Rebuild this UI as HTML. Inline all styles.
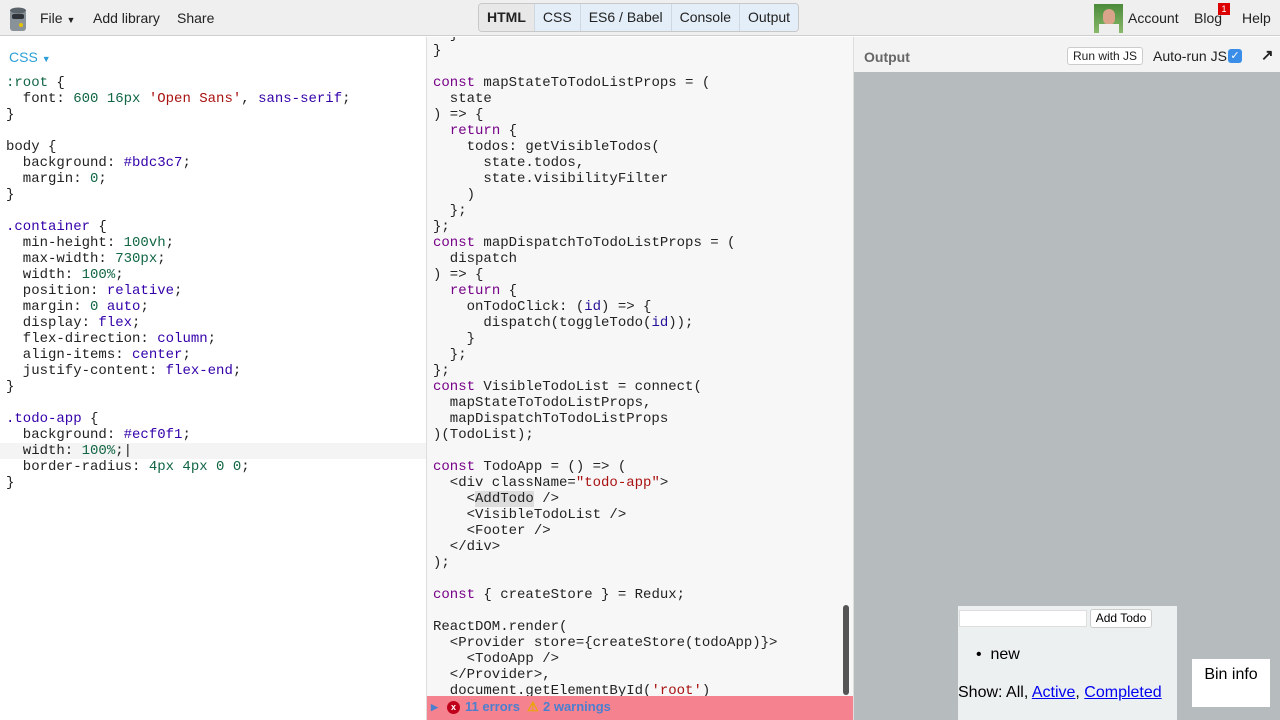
<!DOCTYPE html>
<html><head><meta charset="utf-8"><style>
*{margin:0;padding:0;box-sizing:border-box}
body{width:1280px;height:720px;overflow:hidden;font-family:"Liberation Sans",Arial,sans-serif;background:#fff;position:relative}
#hdr{position:absolute;left:0;top:0;width:1280px;height:36px;background:#efefef;border-bottom:1px solid #cfcfcf}
.hl{position:absolute;top:10px;font-size:14px;color:#222}
#tabs{position:absolute;left:478px;top:3px;height:29px;display:flex;border:1px solid #c8c8c8;border-radius:4px;overflow:hidden;font-size:14px}
#tabs div{padding:0 8px;line-height:27px;background:#e4eef8;border-left:1px solid #cfd8e0;color:#222}
#tabs div:first-child{background:#e8e8e8;font-weight:bold;border-left:none}
pre{font-family:"Liberation Mono",monospace;font-size:14px;line-height:16px;color:#222;position:absolute}
.k{color:#708}.s{color:#a11}.n{color:#164}.a{color:#219}.q{color:#30a}
#css{position:absolute;left:0;top:37px;width:427px;height:683px;background:#fff;overflow:hidden;border-right:1px solid #ddd}
#js{position:absolute;left:427px;top:37px;width:426px;height:683px;background:#f7f7f7;overflow:hidden}
#out{position:absolute;left:853px;top:37px;width:427px;height:683px;background:#b6bbbe;border-left:1px solid #ddd}
#outh{position:absolute;left:0;top:0;width:427px;height:35px;background:#f3f3f3}
</style></head><body>
<div id="hdr">
 <svg style="position:absolute;left:9px;top:6px" width="18" height="26" viewBox="0 0 18 26"><rect x="1" y="4" width="16" height="21" rx="3" fill="#8a9299"/><ellipse cx="9" cy="4.5" rx="8" ry="3" fill="#5c646b"/><rect x="3" y="8" width="12" height="5" rx="2" fill="#2d3338"/><circle cx="12" cy="19" r="2" fill="#e8c400"/></svg>
 <span class="hl" style="left:40px">File <span style="font-size:9px">▼</span></span>
 <span class="hl" style="left:93px">Add library</span>
 <span class="hl" style="left:177px">Share</span>
 <div id="tabs"><div>HTML</div><div>CSS</div><div>ES6 / Babel</div><div>Console</div><div>Output</div></div>
 <div style="position:absolute;left:1094px;top:4px;width:29px;height:29px;background:linear-gradient(#4a8a3a,#8ab86a)"><div style="position:absolute;left:9px;top:5px;width:12px;height:16px;border-radius:6px;background:#d9a48a"></div><div style="position:absolute;left:5px;top:20px;width:20px;height:9px;background:#eee"></div></div>
 <span class="hl" style="left:1128px">Account</span>
 <span class="hl" style="left:1194px">Blog</span>
 <span style="position:absolute;left:1218px;top:3px;width:12px;height:12px;background:#d00;color:#fff;font-size:9px;text-align:center;line-height:12px">1</span>
 <span class="hl" style="left:1242px">Help</span>
</div>
<div id="css">
 <div style="position:absolute;left:9px;top:12px;font-size:14px;color:#2a9fd6">CSS <span style="font-size:9px">▼</span></div>
 <div style="position:absolute;left:0;top:406px;width:426px;height:16px;background:#f4f4f4"></div>
<pre style="left:6px;top:38px"><span class="n">:root</span> {
  font: <span class="n">600 16px</span> <span class="s">'Open Sans'</span>, <span class="q">sans-serif</span>;
}

body {
  background: <span class="q">#bdc3c7</span>;
  margin: <span class="n">0</span>;
}

<span class="q">.container</span> {
  min-height: <span class="n">100vh</span>;
  max-width: <span class="n">730px</span>;
  width: <span class="n">100%</span>;
  position: <span class="q">relative</span>;
  margin: <span class="n">0</span> <span class="q">auto</span>;
  display: <span class="q">flex</span>;
  flex-direction: <span class="q">column</span>;
  align-items: <span class="q">center</span>;
  justify-content: <span class="q">flex-end</span>;
}

<span class="q">.todo-app</span> {
  background: <span class="q">#ecf0f1</span>;
  width: <span class="n">100%</span>;|
  border-radius: <span class="n">4px 4px 0 0</span>;
}</pre>
</div>
<div id="js">
<pre style="left:6px;top:-10px">  }
}

<span class="k">const</span> mapStateToTodoListProps = (
  state
) =&gt; {
  <span class="k">return</span> {
    todos: getVisibleTodos(
      state.todos,
      state.visibilityFilter
    )
  };
};
<span class="k">const</span> mapDispatchToTodoListProps = (
  dispatch
) =&gt; {
  <span class="k">return</span> {
    onTodoClick: (<span class="a">id</span>) =&gt; {
      dispatch(toggleTodo(<span class="a">id</span>));
    }
  };
};
<span class="k">const</span> VisibleTodoList = connect(
  mapStateToTodoListProps,
  mapDispatchToTodoListProps
)(TodoList);

<span class="k">const</span> TodoApp = () =&gt; (
  &lt;div className=<span class="s">"todo-app"</span>&gt;
    &lt;<span style="background:#ddd">AddTodo</span> /&gt;
    &lt;VisibleTodoList /&gt;
    &lt;Footer /&gt;
  &lt;/div&gt;
);

<span class="k">const</span> { createStore } = Redux;

ReactDOM.render(
  &lt;Provider store={createStore(todoApp)}&gt;
    &lt;TodoApp /&gt;
  &lt;/Provider&gt;,
  document.getElementById(<span class="s">'root'</span>)</pre>
 <div style="position:absolute;left:416px;top:568px;width:6px;height:90px;border-radius:3px;background:#555"></div>
 <div style="position:absolute;left:0;top:659px;width:426px;height:24px;background:#f5838f;font-size:13px;font-weight:bold;color:#4a7fd0;line-height:22px">
  <span style="position:absolute;left:4px;font-size:9px;color:#4a7fd0">▶</span>
  <span style="position:absolute;left:20px;top:5px;width:13px;height:13px;border-radius:50%;background:#c0001a;color:#fff;font-size:9px;line-height:13px;text-align:center">x</span>
  <span style="position:absolute;left:38px">11 errors</span>
  <span style="position:absolute;left:100px;color:#e8a800">⚠</span>
  <span style="position:absolute;left:116px">2 warnings</span>
 </div>
</div>
<div id="out">
 <div id="outh">
  <span style="position:absolute;left:10px;top:12px;font-size:14px;font-weight:bold;color:#666">Output</span>
  <span style="position:absolute;left:213px;top:10px;width:76px;height:18px;border:1px solid #ccc;border-radius:3px;background:#fff;font-size:12px;text-align:center;line-height:16px;color:#222">Run with JS</span>
  <span style="position:absolute;left:299px;top:11px;font-size:14px;color:#222">Auto-run JS</span>
  <span style="position:absolute;left:374px;top:12px;width:14px;height:14px;border-radius:3px;background:#3b8ee8;color:#fff;font-size:11px;text-align:center;line-height:14px">✓</span>
  <span style="position:absolute;left:407px;top:9px;font-size:15px;font-weight:bold;color:#222">↗</span>
 </div>
 <div style="position:absolute;left:104px;top:569px;width:219px;height:114px;background:#ecf0f1">
  <div style="position:absolute;left:1px;top:4px;width:128px;height:17px;background:#fff;border:1px solid #ddd"></div>
  <div style="position:absolute;left:132px;top:3px;height:19px;background:#fff;border:1px solid #ccc;border-radius:3px;font-size:12px;text-align:center;line-height:17px;width:62px">Add Todo</div>
  <div style="position:absolute;left:18px;top:40px;font-size:16px">•&nbsp;&nbsp;new</div>
  <div style="position:absolute;left:0;top:78px;font-size:16px;white-space:nowrap">Show: All, <u style="color:#00e">Active</u>, <u style="color:#00e">Completed</u></div>
 </div>
 <div style="position:absolute;left:338px;top:622px;width:78px;height:48px;background:#fff;font-size:16px;text-align:center;line-height:32px">Bin info</div>
</div>
</body></html>
